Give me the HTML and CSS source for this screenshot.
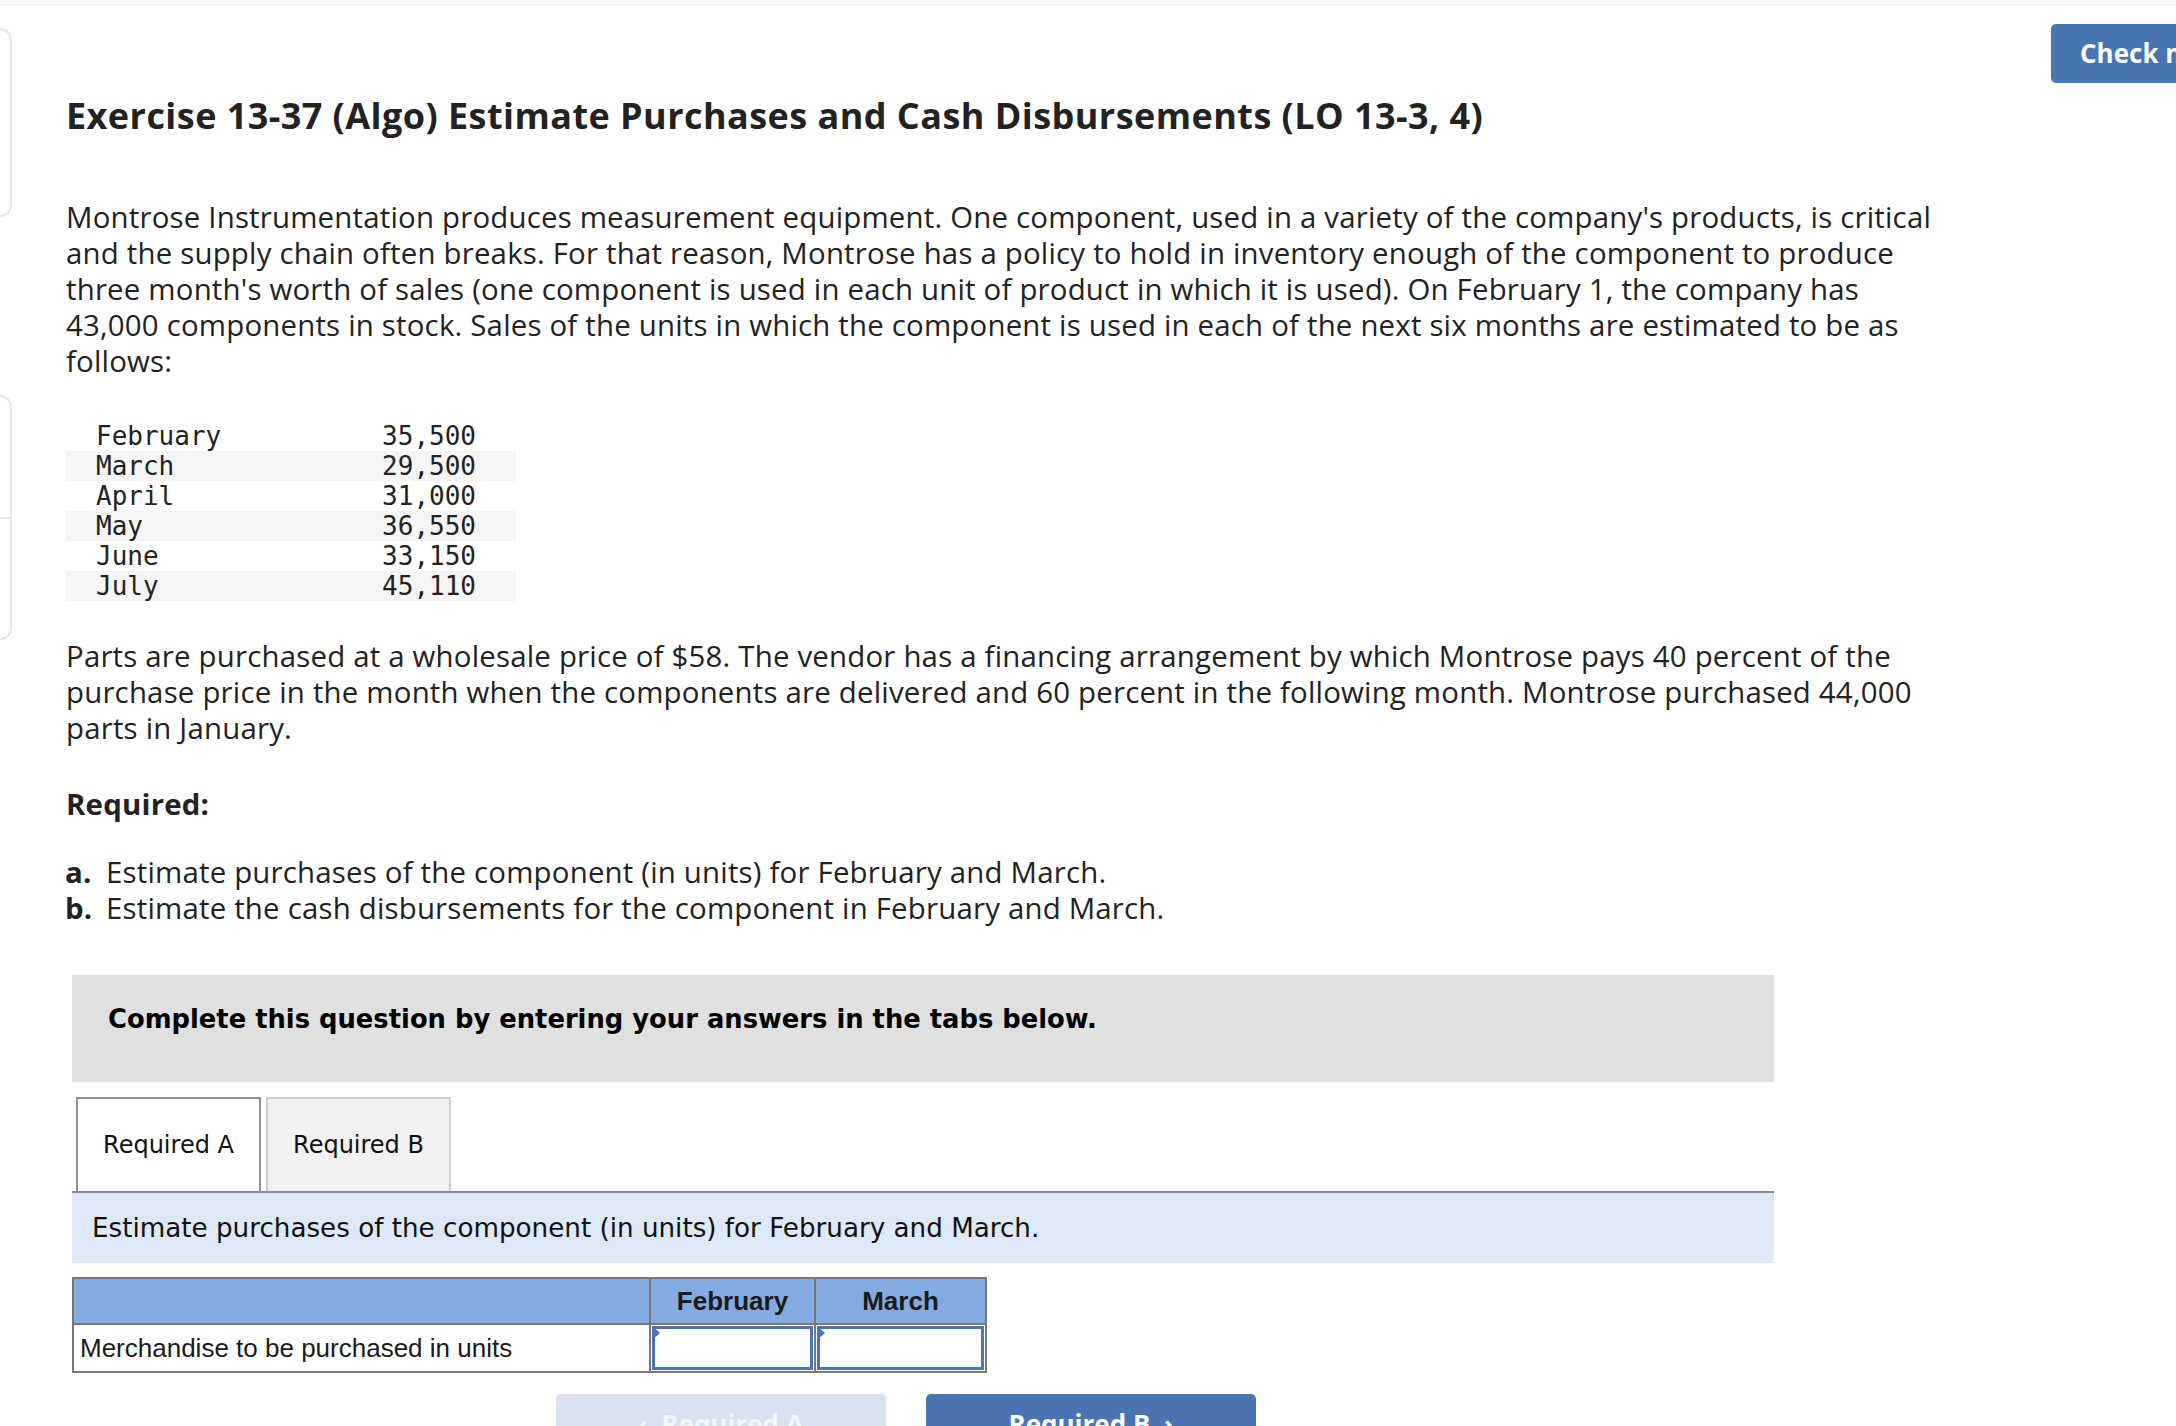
FILE: index.html
```html
<!DOCTYPE html>
<html lang="en">
<head>
<meta charset="utf-8">
<title>Exercise 13-37</title>
<link rel="stylesheet" href="styles.css">
</head>
<body>
<div class="topbar"></div>
<div class="side side-top"></div>
<div class="side side-mid"><div class="side-cell"></div><div class="side-cell"></div></div>
<div class="toolbar"><button class="check">Check my work</button></div>
<main class="page">
  <h1 class="title">Exercise 13-37 (Algo) Estimate Purchases and Cash Disbursements (LO 13-3, 4)</h1>
  <p class="para">Montrose Instrumentation produces measurement equipment. One component, used in a variety of the company's products, is critical and the supply chain often breaks. For that reason, Montrose has a policy to hold in inventory enough of the component to produce three month's worth of sales (one component is used in each unit of product in which it is used). On February 1, the company has 43,000 components in stock. Sales of the units in which the component is used in each of the next six months are estimated to be as follows:</p>
  <table class="sales">
    <tr><td class="m">February</td><td class="n">35,500</td></tr>
    <tr><td class="m">March</td><td class="n">29,500</td></tr>
    <tr><td class="m">April</td><td class="n">31,000</td></tr>
    <tr><td class="m">May</td><td class="n">36,550</td></tr>
    <tr><td class="m">June</td><td class="n">33,150</td></tr>
    <tr><td class="m">July</td><td class="n">45,110</td></tr>
  </table>
  <p class="para para2">Parts are purchased at a wholesale price of $58. The vendor has a financing arrangement by which Montrose pays 40 percent of the purchase price in the month when the components are delivered and 60 percent in the following month. Montrose purchased 44,000 parts in January.</p>
  <h2 class="req">Required:</h2>
  <ul class="reqlist">
    <li><span class="mk">a.</span><span>Estimate purchases of the component (in units) for February and March.</span></li>
    <li><span class="mk">b.</span><span>Estimate the cash disbursements for the component in February and March.</span></li>
  </ul>
  <section class="answer">
    <div class="note">Complete this question by entering your answers in the tabs below.</div>
    <div class="tabs">
      <div class="tab active">Required A</div>
      <div class="tab">Required B</div>
    </div>
    <div class="instr">Estimate purchases of the component (in units) for February and March.</div>
    <table class="grid">
      <tr class="hd"><th class="c1"></th><th class="c2">February</th><th class="c3">March</th></tr>
      <tr><td class="lbl">Merchandise to be purchased in units</td><td class="inp"><div class="box"></div></td><td class="inp"><div class="box"></div></td></tr>
    </table>
    <div class="nav">
      <button class="navbtn prev">&lsaquo;&nbsp; Required A</button>
      <button class="navbtn next">Required B &nbsp;&rsaquo;</button>
    </div>
  </section>
</main>
</body>
</html>
```
FILE: styles.css
```css
html, body {
  margin: 0;
  padding: 0;
  overflow: hidden;
  background: #fff;
}
body {
  width: 2176px;
  height: 1426px;
  position: relative;
  font-family: "Open Sans", "Noto Sans", sans-serif;
  color: #222;
}
.topbar {
  height: 4px;
  background: #f8f8f8;
  border-bottom: 2px solid #eeeeee;
}
.side {
  position: absolute;
  left: -20px;
  width: 28px;
  border: 2px solid #e6e6e6;
  border-radius: 0 12px 12px 0;
  background: #fff;
}
.side-top {
  top: 28px;
  height: 185px;
}
.side-mid {
  top: 395px;
  height: 241px;
  display: flex;
  flex-direction: column;
}
.side-cell {
  flex: 1;
}
.side-cell + .side-cell {
  border-top: 2px solid #e6e6e6;
}
.toolbar {
  display: flex;
  justify-content: flex-end;
  padding-top: 18px;
  margin-right: -110px;
}
.check {
  width: 235px;
  height: 59px;
  border: none;
  border-radius: 5px;
  background: #4a75b3;
  color: #fff;
  font-family: "Open Sans", sans-serif;
  font-weight: 700;
  font-size: 26px;
  text-align: left;
  padding: 0 0 2px 29px;
}
.page {
  padding: 0 238px 0 66px;
}
.title {
  margin: 12px 0 0;
  font-size: 36px;
  letter-spacing: 0.45px;
  line-height: 42px;
  font-weight: 700;
}
.para {
  margin: 62px 0 0;
  font-size: 29.4px;
  letter-spacing: 0.2px;
  line-height: 36px;
}
.sales {
  margin-top: 42px;
  border-collapse: collapse;
  width: 450px;
  font-family: "DejaVu Sans Mono", monospace;
  font-size: 26px;
  line-height: 30px;
}
.sales td {
  padding: 0;
  height: 30px;
}
.sales tr:nth-child(even) {
  background: #f5f5f5;
}
.sales .m {
  padding-left: 30px;
}
.sales .n {
  text-align: right;
  padding-right: 40px;
}
.para2 {
  margin-top: 37px;
}
.req {
  margin: 40px 0 0;
  font-size: 29.4px;
  letter-spacing: 0.2px;
  line-height: 36px;
  font-weight: 700;
}
.reqlist {
  list-style: none;
  margin: 32px 0 0;
  padding: 0;
  font-size: 29.4px;
  letter-spacing: 0.2px;
  line-height: 36px;
}
.reqlist li {
  display: flex;
}
.mk {
  width: 41px;
  font-weight: 700;
  margin-left: -1px;
}
.answer {
  margin: 49px 0 0 6px;
  width: 1702px;
}
.note {
  background: #e0e0e0;
  height: 107px;
  box-sizing: border-box;
  padding: 28px 0 0 36px;
  font-family: "DejaVu Sans", sans-serif;
  font-weight: 700;
  font-size: 25.8px;
  line-height: 32px;
  color: #000;
}
.tabs {
  display: flex;
  gap: 5px;
  margin-top: 15px;
  padding-left: 4px;
  border-bottom: 2px solid #8a8a8a;
}
.tab {
  width: 185px;
  height: 94px;
  box-sizing: border-box;
  display: flex;
  align-items: center;
  justify-content: center;
  font-family: "DejaVu Sans", sans-serif;
  font-size: 24px;
  color: #111;
  background: #f2f2f2;
  border: 2px solid #cfcfcf;
  border-bottom: none;
}
.tab.active {
  background: #fff;
  border-color: #8f8f8f;
}
.instr {
  background: #dde9f7;
  height: 70px;
  box-sizing: border-box;
  padding-left: 20px;
  display: flex;
  align-items: center;
  font-family: "DejaVu Sans", sans-serif;
  font-size: 26.2px;
  color: #111;
}
.grid {
  margin-top: 14px;
  border-collapse: collapse;
  font-family: "Liberation Sans", Arial, sans-serif;
  font-size: 26px;
  color: #1a1a1a;
}
.grid th, .grid td {
  border: 2px solid #777;
  padding: 0;
}
.grid .hd th {
  background: #84abe0;
  height: 44px;
  font-weight: 700;
}
.grid .c1 { width: 575px; }
.grid .c2 { width: 163px; }
.grid .c3 { width: 169px; }
.grid .lbl {
  height: 43px;
  padding-left: 6px;
  text-align: left;
}
.grid .inp {
  position: relative;
  padding: 0;
}
.box {
  position: relative;
  height: 38px;
  margin: 1px;
  border: 3px solid #4a74b4;
  background: #fff;
}
.box::before {
  content: "";
  position: absolute;
  left: -3px;
  top: -3px;
  border-top: 7px solid transparent;
  border-bottom: 7px solid transparent;
  border-left: 8px solid #4a74b4;
}
.nav {
  display: flex;
  gap: 40px;
  margin: 21px 0 0 484px;
}
.navbtn {
  width: 330px;
  height: 60px;
  border: none;
  border-radius: 5px;
  font-family: "Open Sans", sans-serif;
  font-weight: 700;
  font-size: 26px;
  color: #fff;
}
.prev {
  background: #d9e3ef;
  color: #f4f7fb;
}
.next {
  background: #4a74b2;
}
```
